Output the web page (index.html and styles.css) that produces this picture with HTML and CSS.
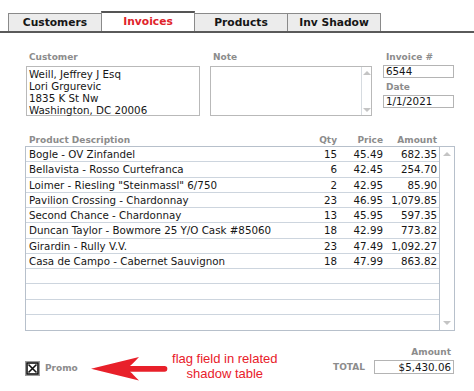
FILE: index.html
```html
<!DOCTYPE html>
<html lang="en">
<head>
<meta charset="UTF-8" />
<meta name="viewport" content="width=device-width, initial-scale=1" />
<title>Invoices</title>
<link rel="stylesheet" href="styles.css">
</head>
<body>
  <div class="tabs">
    <div class="tab">Customers</div>
    <div class="tab active">Invoices</div>
    <div class="tab">Products</div>
    <div class="tab">Inv Shadow</div>
  </div>

  <div class="head">
    <div class="field customer">
      <div class="label">Customer</div>
      <div class="box">Weill, Jeffrey J Esq<br>Lori Grgurevic<br>1835 K St Nw<br>Washington, DC 20006</div>
    </div>
    <div class="field note">
      <div class="label">Note</div>
      <div class="box note-box">
        <div class="note-text"></div>
        <div class="scroll note-scroll"><span class="up"></span><span class="down"></span></div>
      </div>
    </div>
    <div class="field invoice">
      <div class="label">Invoice #</div>
      <div class="input">6544</div>
      <div class="label date-label">Date</div>
      <div class="input">1/1/2021</div>
    </div>
  </div>

  <div class="lines">
    <div class="row heading">
      <span class="desc">Product Description</span>
      <span>Qty</span>
      <span>Price</span>
      <span class="amt">Amount</span>
    </div>
    <div class="table">
      <div class="rows">
        <div class="row"><span class="desc">Bogle - OV Zinfandel</span><span>15</span><span>45.49</span><span class="amt">682.35</span></div>
        <div class="row"><span class="desc">Bellavista - Rosso Curtefranca</span><span>6</span><span>42.45</span><span class="amt">254.70</span></div>
        <div class="row"><span class="desc">Loimer - Riesling "Steinmassl" 6/750</span><span>2</span><span>42.95</span><span class="amt">85.90</span></div>
        <div class="row"><span class="desc">Pavilion Crossing - Chardonnay</span><span>23</span><span>46.95</span><span class="amt">1,079.85</span></div>
        <div class="row"><span class="desc">Second Chance - Chardonnay</span><span>13</span><span>45.95</span><span class="amt">597.35</span></div>
        <div class="row"><span class="desc">Duncan Taylor - Bowmore 25 Y/O Cask #85060</span><span>18</span><span>42.99</span><span class="amt">773.82</span></div>
        <div class="row"><span class="desc">Girardin - Rully V.V.</span><span>23</span><span>47.49</span><span class="amt">1,092.27</span></div>
        <div class="row"><span class="desc">Casa de Campo - Cabernet Sauvignon</span><span>18</span><span>47.99</span><span class="amt">863.82</span></div>
        <div class="row"></div>
        <div class="row"></div>
        <div class="row"></div>
        <div class="row"></div>
      </div>
      <div class="scroll table-scroll"><span class="up"></span><span class="down"></span></div>
    </div>
  </div>

  <div class="footer">
    <div class="promo">
      <svg width="15" height="15" viewBox="0 0 15 15" aria-hidden="true">
        <rect x="0.5" y="0.5" width="14" height="14" fill="#fff" stroke="#9a9a9a"/>
        <rect x="2" y="2" width="11" height="11" fill="#fff" stroke="#111" stroke-width="1.6"/>
        <path d="M3.5 3.5 L11.5 11.5 M11.5 3.5 L3.5 11.5" stroke="#111" stroke-width="1.6"/>
      </svg>
      <span class="label">Promo</span>
    </div>
    <svg class="arrow" width="77" height="26" viewBox="0 0 77 26" aria-hidden="true">
      <path d="M0 12.7 L48 1 C44 5 41 8.5 39 10 L73.5 10 A2.85 2.85 0 0 1 73.5 15.7 L39 15.7 C41 17 44 20.5 48 24.4 Z" fill="#e8202a"/>
    </svg>
    <div class="flag">flag field in related<br>shadow table</div>
    <div class="total">
      <div class="label">Amount</div>
      <div class="total-row">
        <span class="label">TOTAL</span>
        <div class="input total-input">$5,430.06</div>
      </div>
    </div>
  </div>
</body>
</html>
```

FILE: styles.css
```css
body {
  margin: 0;
  font-family: "DejaVu Sans", Verdana, sans-serif;
  font-size: 10.3px;
  color: #161616;
  background: #fff;
}
.tabs {
  display: flex;
  align-items: flex-end;
  padding: 11px 0 0 8px;
  border-bottom: 2px solid #5a5a5a;
}
.tab {
  box-sizing: border-box;
  width: 94px;
  height: 18px;
  margin-right: -1px;
  border: 1px solid #8a8a8a;
  border-bottom: 0;
  background: #ececec;
  font-size: 10.7px;
  font-weight: bold;
  line-height: 17px;
  text-align: center;
}
.tab.active {
  position: relative;
  z-index: 1;
  height: 20px;
  border-top: 2px solid #555;
  background: #fff;
  color: #e0232b;
  line-height: 18px;
}
.label {
  font-size: 9px;
  font-weight: bold;
  color: #8c8c8c;
  line-height: 11px;
}
.head {
  display: flex;
  padding: 19px 0 0 26px;
}
.field .label {
  margin: 0 0 3px 3px;
}
.box {
  box-sizing: border-box;
  height: 50px;
  border: 1px solid #b9b9b9;
  padding: 1px 3px;
  line-height: 12px;
}
.customer .box {
  width: 174px;
  padding-left: 2px;
}
.note {
  margin-left: 10px;
}
.note-box {
  display: flex;
  width: 162px;
  padding: 0;
}
.note-text {
  flex: 1;
}
.invoice {
  margin-left: 11px;
  width: 71px;
}
.input {
  box-sizing: border-box;
  height: 13px;
  border: 1px solid #b4b4b4;
  padding: 0 2px;
  line-height: 11px;
}
.invoice .label {
  margin-bottom: 2px;
}
.invoice .date-label {
  margin-top: 4px;
}
.scroll {
  display: flex;
  flex-direction: column;
  justify-content: space-between;
  align-items: center;
  border-left: 1px solid #d6dbe0;
}
.note-scroll {
  width: 9px;
  padding: 4px 0 3px;
}
.up, .down {
  width: 0;
  height: 0;
  border-left: 4px solid transparent;
  border-right: 4px solid transparent;
}
.up {
  border-bottom: 4px solid #c4c4c4;
}
.down {
  border-top: 4px solid #c4c4c4;
}
.lines {
  margin: 19px 0 0 25px;
  width: 430px;
}
.row {
  display: grid;
  grid-template-columns: 1fr 40px 46px 56px;
  text-align: right;
}
.row .desc {
  text-align: left;
  padding-left: 3px;
  white-space: nowrap;
}
.row .amt {
  padding-right: 2px;
}
.heading {
  padding: 0 16px 0 1px;
  font-size: 9px;
  font-weight: bold;
  color: #8c8c8c;
  line-height: 11px;
}
.table {
  display: flex;
  border: 1px solid #b7c0cb;
}
.rows {
  flex: 1;
  border-right: 1px solid #b7c0cb;
}
.rows .row {
  box-sizing: border-box;
  height: 15.25px;
  line-height: 14.25px;
  border-bottom: 1px solid #cdd5de;
}
.rows .row:last-child {
  border-bottom: 0;
}
.table-scroll {
  width: 14px;
  padding: 5px 0;
  border-left: 0;
}
.footer {
  display: flex;
  align-items: flex-start;
  margin-top: 16px;
  padding: 0 20px 0 25px;
}
.promo {
  display: flex;
  align-items: center;
  gap: 5px;
  margin-top: 14px;
}
.arrow {
  margin: 9px 0 0 13px;
}
.flag {
  width: 106px;
  margin: 4px 0 0 4px;
  font-family: "Liberation Sans", Arial, sans-serif;
  font-size: 13px;
  line-height: 15px;
  white-space: nowrap;
  text-align: center;
  color: #e8202a;
}
.total {
  display: flex;
  flex-direction: column;
  align-items: flex-end;
  margin-left: auto;
}
.total > .label {
  margin-right: 3px;
}
.total-row {
  display: flex;
  align-items: center;
  gap: 9px;
  margin-top: 2px;
}
.total-input {
  width: 80px;
  height: 14px;
  line-height: 12px;
  text-align: right;
}
```
